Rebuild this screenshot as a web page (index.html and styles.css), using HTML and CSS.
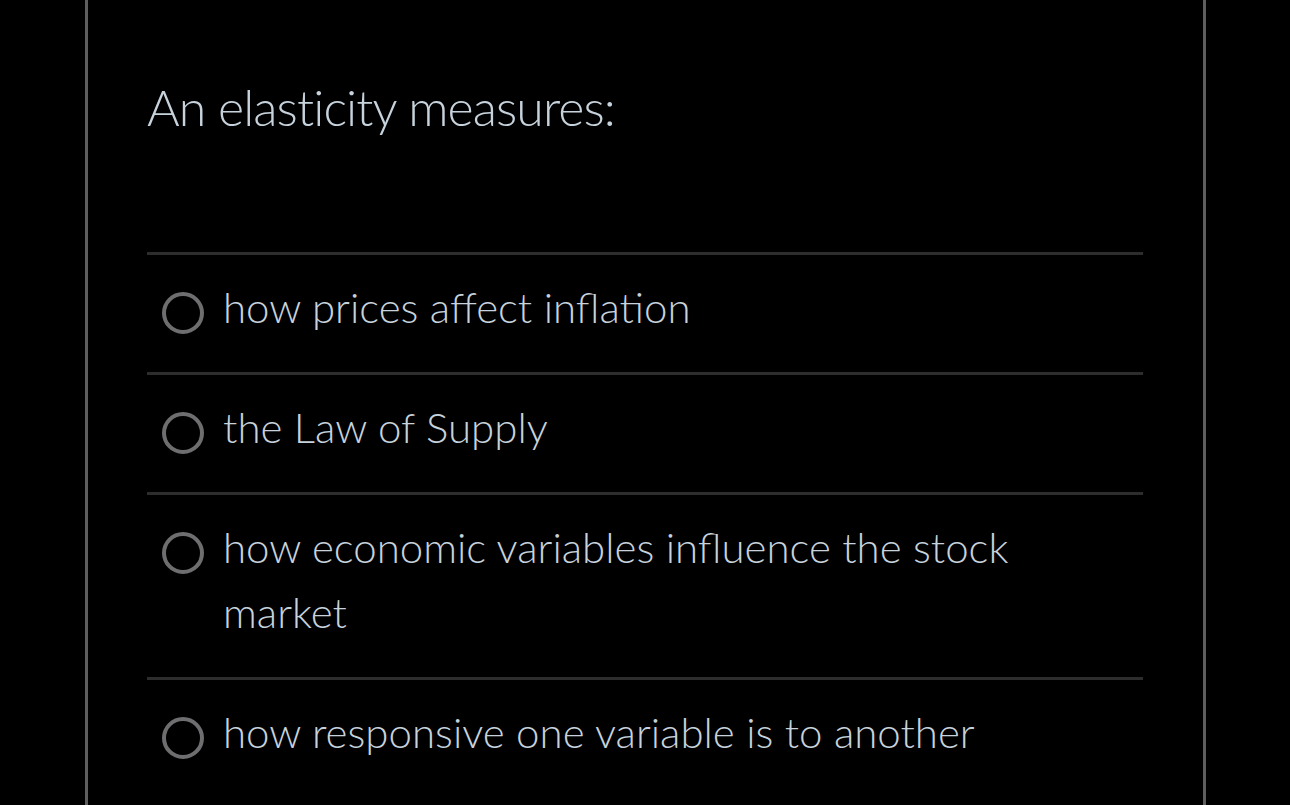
FILE: index.html
```html
<!DOCTYPE html>
<html lang="en">
<head>
<meta charset="utf-8">
<title>Question</title>
<link rel="stylesheet" href="styles.css">
</head>
<body>
<main class="panel">
  <h1 class="question">An elasticity measures:</h1>
  <ul class="options">
    <li class="option"><span class="radio"></span><span class="label">how prices affect inflation</span></li>
    <li class="option"><span class="radio"></span><span class="label">the Law of Supply</span></li>
    <li class="option"><span class="radio"></span><span class="label">how economic variables influence the stock market</span></li>
    <li class="option"><span class="radio"></span><span class="label">how responsive one variable is to another</span></li>
  </ul>
</main>
</body>
</html>
```
FILE: styles.css
```css
html, body {
  margin: 0;
  padding: 0;
  background: #000;
}
body {
  font-family: "Lato", "Open Sans", sans-serif;
  color: #c6d2dc;
  overflow: hidden;
}
.panel {
  box-sizing: border-box;
  margin-left: 85px;
  width: 1121px;
  min-height: 100vh;
  border-left: 3px solid #5e5e5e;
  border-right: 3px solid #5e5e5e;
  padding: 77px 60px 0 59px;
}
.question {
  margin: 0 0 115px 0;
  font-size: 50px;
  font-weight: 300;
  line-height: 60px;
  letter-spacing: -0.9px;
}
.options {
  list-style: none;
  margin: 0;
  padding: 0;
}
.option {
  display: flex;
  align-items: flex-start;
  border-top: 3px solid #2d2d2d;
  padding: 20px 0 32px 15px;
}
.radio {
  flex: none;
  box-sizing: border-box;
  width: 42px;
  height: 42px;
  border: 4px solid #6e6e70;
  border-radius: 50%;
  margin-top: 17px;
  margin-right: 19px;
}
.label {
  font-size: 42px;
  font-weight: 300;
  line-height: 65px;
  max-width: 820px;
}
```
